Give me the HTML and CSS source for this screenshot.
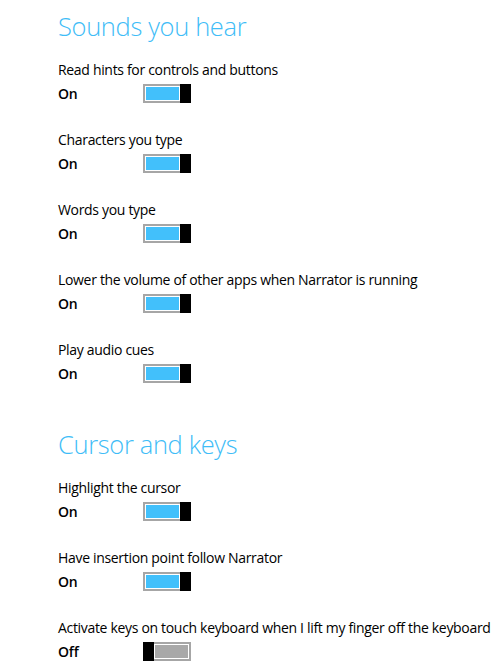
FILE: index.html
```html
<!DOCTYPE html>
<html>
<head>
<meta charset="utf-8">
<link rel="stylesheet" href="styles.css">
</head>
<body>
<div class="page">
  <section class="group">
    <h2 class="heading">Sounds you hear</h2>
    <div class="setting">
      <div class="label">Read hints for controls and buttons</div>
      <div class="row"><span class="state">On</span><span class="toggle on"><span class="fill"></span><span class="thumb"></span></span></div>
    </div>
    <div class="setting">
      <div class="label">Characters you type</div>
      <div class="row"><span class="state">On</span><span class="toggle on"><span class="fill"></span><span class="thumb"></span></span></div>
    </div>
    <div class="setting">
      <div class="label">Words you type</div>
      <div class="row"><span class="state">On</span><span class="toggle on"><span class="fill"></span><span class="thumb"></span></span></div>
    </div>
    <div class="setting">
      <div class="label">Lower the volume of other apps when Narrator is running</div>
      <div class="row"><span class="state">On</span><span class="toggle on"><span class="fill"></span><span class="thumb"></span></span></div>
    </div>
    <div class="setting">
      <div class="label">Play audio cues</div>
      <div class="row"><span class="state">On</span><span class="toggle on"><span class="fill"></span><span class="thumb"></span></span></div>
    </div>
  </section>
  <section class="group">
    <h2 class="heading">Cursor and keys</h2>
    <div class="setting">
      <div class="label">Highlight the cursor</div>
      <div class="row"><span class="state">On</span><span class="toggle on"><span class="fill"></span><span class="thumb"></span></span></div>
    </div>
    <div class="setting">
      <div class="label">Have insertion point follow Narrator</div>
      <div class="row"><span class="state">On</span><span class="toggle on"><span class="fill"></span><span class="thumb"></span></span></div>
    </div>
    <div class="setting">
      <div class="label">Activate keys on touch keyboard when I lift my finger off the keyboard</div>
      <div class="row"><span class="state">Off</span><span class="toggle off"><span class="thumb"></span><span class="fill"></span></span></div>
    </div>
  </section>
</div>
</body>
</html>
```
FILE: styles.css
```css
html, body {
  margin: 0;
  padding: 0;
  background: #ffffff;
}
body {
  width: 500px;
  height: 663px;
  overflow: hidden;
  font-family: "Open Sans", "Noto Sans", "Liberation Sans", sans-serif;
  color: #000000;
}
.page {
  padding: 8px 0 0 58px;
  white-space: nowrap;
}
.group {
  display: flex;
  flex-direction: column;
}
.group + .group {
  margin-top: 16px;
}
.heading {
  margin: 0 0 16px 0;
  font-size: 25.5px;
  line-height: 36px;
  font-weight: 300;
  letter-spacing: -0.35px;
  color: #3fbdf7;
}
.setting {
  display: flex;
  flex-direction: column;
  gap: 4px;
  margin-bottom: 27px;
}
.label {
  font-size: 14px;
  line-height: 20px;
  letter-spacing: -0.32px;
  color: #000;
}
.row {
  display: flex;
  align-items: center;
  height: 19px;
}
.state {
  width: 85px;
  font-size: 14px;
  font-weight: 600;
  letter-spacing: -0.2px;
}
.toggle {
  display: flex;
  width: 48px;
  height: 19px;
  box-sizing: border-box;
}
.toggle .fill {
  flex: 1;
  border: 2px solid #a6a6a6;
  box-shadow: inset 0 0 0 1px #ffffff;
}
.toggle.on .fill {
  background: #42c0fb;
  border-right: none;
}
.toggle.off .fill {
  background: #a8a8a8;
  border-left: none;
}
.toggle .thumb {
  width: 11px;
  background: #000000;
}
```
